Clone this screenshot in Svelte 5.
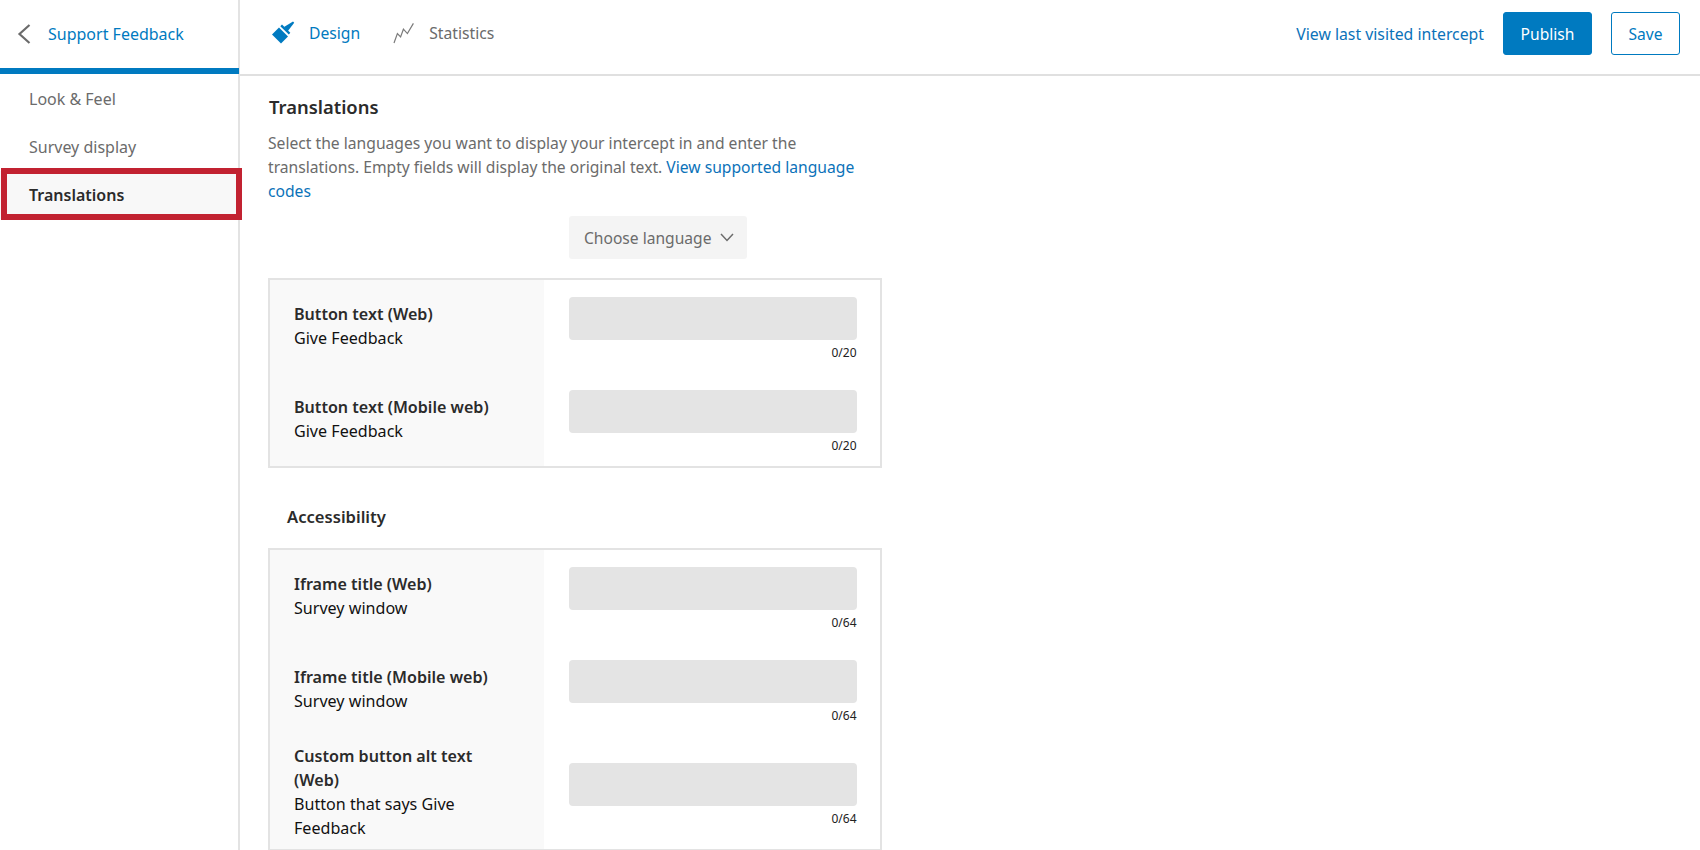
<script lang="ts">
    const sections = [
        {
            title: null,
            rows: [
                { label: "Button text (Web)", original: "Give Feedback", max: 20 },
                { label: "Button text (Mobile web)", original: "Give Feedback", max: 20 },
            ],
        },
        {
            title: "Accessibility",
            rows: [
                { label: "Iframe title (Web)", original: "Survey window", max: 64 },
                { label: "Iframe title (Mobile web)", original: "Survey window", max: 64 },
                { label: "Custom button alt text (Web)", original: "Button that says Give Feedback", max: 64 },
            ],
        },
    ];

    const navItems = ["Look & Feel", "Survey display", "Translations"];
    let activeNav = $state("Translations");
</script>

<div class="page">
    <aside class="sidebar">
        <div class="back">
            <svg class="chevron" width="14" height="20" viewBox="0 0 14 20" fill="none" stroke="#6b6b6b" stroke-width="2.2">
                <path d="M12.5 1 L2.5 10 L12.5 19" />
            </svg>
            <span>Support Feedback</span>
        </div>
        <div class="back-bar"></div>
        <nav class="nav">
            {#each navItems as item}
                <button type="button" class="nav-item" class:active={activeNav === item} onclick={() => (activeNav = item)}>
                    {item}
                </button>
            {/each}
        </nav>
        <div class="highlight"></div>
    </aside>

    <div class="main">
        <header class="topbar">
            <div class="tabs">
                <div class="tab current">
                    <svg width="24" height="24" viewBox="0 0 24 24" fill="#007ac0">
                        <path d="M13 6 L22 0.5 L23.2 1.8 L16.5 10.5 Z" />
                        <path d="M9.3 5.2 L11 3.5 L19.3 11.8 L17.8 13.5 Z" />
                        <path d="M1 13.5 L8 6.5 L17 15.5 L10 22.5 Z" />
                    </svg>
                    <span>Design</span>
                </div>
                <div class="tab">
                    <svg width="22" height="22" viewBox="0 0 22 22" fill="none" stroke="#7a7a7a" stroke-width="1.2">
                        <path d="M1 21 L4.4 11.6 L7.6 15 L10.4 7.2 L14.4 11.6 L20.4 1.4" />
                    </svg>
                    <span>Statistics</span>
                </div>
            </div>
            <div class="actions">
                <span class="link">View last visited intercept</span>
                <button type="button" class="btn primary">Publish</button>
                <button type="button" class="btn outline">Save</button>
            </div>
        </header>

        <section class="content">
            <h1>Translations</h1>
            <p class="intro">
                Select the languages you want to display your intercept in and enter the translations. Empty fields will display the original text. <span class="link">View supported language codes</span>
            </p>
            <div class="chooser">
                <button type="button" class="choose">
                    Choose language
                    <svg width="14" height="9" viewBox="0 0 14 9" fill="none" stroke="#6b6b6b" stroke-width="1.5">
                        <path d="M1 1 L7 7.4 L13 1" />
                    </svg>
                </button>
            </div>

            {#each sections as section}
                {#if section.title}
                    <h2>{section.title}</h2>
                {/if}
                <div class="table">
                    {#each section.rows as row}
                        <div class="row">
                            <div class="label-cell">
                                <div class="label-text">
                                    <strong>{row.label}</strong>
                                    <div>{row.original}</div>
                                </div>
                            </div>
                            <div class="field-cell">
                                <div class="fake-input"></div>
                                <div class="count">0/{row.max}</div>
                            </div>
                        </div>
                    {/each}
                </div>
            {/each}
        </section>
    </div>
</div>

<style>
    :global(body) {
        margin: 0;
        background: #fff;
    }

    .page {
        display: flex;
        height: 850px;
        overflow: hidden;
        font-family: "Noto Sans", "Open Sans", sans-serif;
        font-size: 16px;
        color: #2b2b2b;
    }

    .sidebar {
        position: relative;
        flex: 0 0 238px;
        border-right: 2px solid #e3e3e3;
    }

    .back {
        display: flex;
        align-items: center;
        height: 68px;
        padding-left: 17px;
        gap: 17px;
        color: #007ac0;
        font-size: 16px;
    }

    .back-bar {
        height: 6px;
        margin-right: -1px;
        background: #007ac0;
    }

    .nav {
        padding-top: 1px;
    }

    .nav-item {
        display: block;
        width: 100%;
        height: 48px;
        padding: 0 0 0 29px;
        border: none;
        background: transparent;
        text-align: left;
        font: inherit;
        font-size: 16px;
        color: #6b6b6b;
    }

    .nav-item.active {
        background: #f8f8f8;
        color: #2b2b2b;
        font-weight: 600;
    }

    .highlight {
        position: absolute;
        left: 1px;
        top: 168px;
        width: 241px;
        height: 52px;
        box-sizing: border-box;
        border: 6px solid #c22231;
    }

    .main {
        flex: 1;
        min-width: 0;
    }

    .topbar {
        display: flex;
        align-items: center;
        justify-content: space-between;
        box-sizing: border-box;
        height: 76px;
        padding: 0 20px 7px 31px;
        border-bottom: 2px solid #e0e0e0;
    }

    .tabs {
        display: flex;
        gap: 33px;
    }

    .tab {
        display: flex;
        align-items: center;
        gap: 14px;
        font-size: 15.7px;
        color: #6b6b6b;
        margin-top: -2px;
    }

    .tab.current {
        color: #007ac0;
    }

    .actions {
        display: flex;
        align-items: center;
    }

    .link {
        color: #0b72b9;
    }

    .actions .link {
        font-size: 15.8px;
        margin-right: 19px;
    }

    .btn {
        height: 43px;
        box-sizing: border-box;
        border-radius: 3px;
        font: inherit;
        font-size: 15.6px;
    }

    .primary {
        width: 89px;
        margin-right: 19px;
        background: #007ac0;
        border: 1px solid #007ac0;
        color: #fff;
    }

    .outline {
        width: 69px;
        background: #fff;
        border: 1px solid #007ac0;
        color: #007ac0;
    }

    .content {
        width: 614px;
        margin-left: 28px;
    }

    h1 {
        margin: 0;
        padding: 19px 0 0 1px;
        font-size: 18.4px;
        line-height: 24px;
        font-weight: 600;
        color: #2b2b2b;
    }

    .intro {
        margin: 12px 0 0;
        width: 600px;
        font-size: 15.66px;
        line-height: 24px;
        color: #6b6b6b;
    }

    .chooser {
        display: flex;
        margin-top: 13px;
        padding-left: 301px;
    }

    .choose {
        display: flex;
        align-items: center;
        gap: 9px;
        height: 43px;
        padding: 0 13px 0 15px;
        border: none;
        border-radius: 3px;
        background: #f4f4f4;
        font: inherit;
        font-size: 15.6px;
        color: #6b6b6b;
    }

    h2 {
        margin: 37px 0 19px 19px;
        font-size: 16.6px;
        line-height: 24px;
        font-weight: 600;
        color: #2b2b2b;
    }

    .table {
        margin-top: 19px;
        border: 2px solid #e3e3e3;
    }

    h2 + .table {
        margin-top: 0;
    }

    .row {
        display: flex;
        min-height: 93px;
        background: linear-gradient(to right, #f9f9f9 274px, #fff 274px);
    }

    .label-cell {
        display: flex;
        align-items: center;
        flex: 0 0 274px;
        box-sizing: border-box;
        padding: 8px 40px 9px 24px;
    }

    .label-text {
        font-size: 16.1px;
        line-height: 24px;
        color: #111;
    }

    .label-text strong {
        font-weight: 600;
        color: #2b2b2b;
    }

    .field-cell {
        display: flex;
        flex-direction: column;
        justify-content: center;
        flex: 1;
        padding: 0 23.5px 0 25px;
    }

    .fake-input {
        height: 43px;
        border-radius: 4px;
        background: #e4e4e4;
    }

    .count {
        box-sizing: border-box;
        height: 17px;
        padding-top: 1px;
        line-height: 24px;
        text-align: right;
        font-size: 12px;
        color: #222;
    }
</style>
